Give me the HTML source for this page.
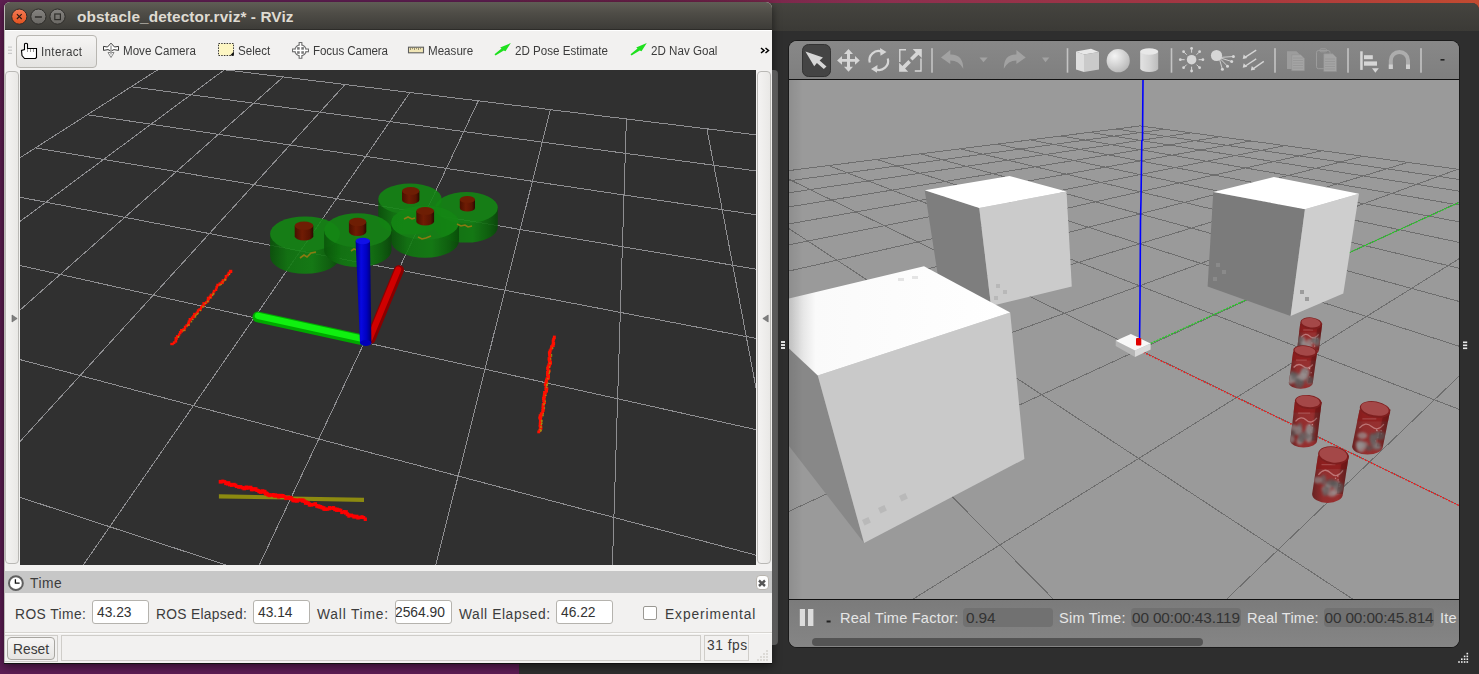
<!DOCTYPE html>
<html><head><meta charset="utf-8">
<style>
*{box-sizing:border-box;margin:0;padding:0}
html,body{width:1479px;height:674px;overflow:hidden;font-family:"Liberation Sans",sans-serif}
body{position:relative;background:#2a2a2a}
.a{position:absolute}
#desk{left:0;top:0;width:1479px;height:674px;background:linear-gradient(90deg,#5a1e4e 0%,#6a2049 45%,#8c2f4f 60%,#a8383f 85%,#c24a30 100%)}
#deskl{left:0;top:0;width:520px;height:674px;background:linear-gradient(180deg,#5f1e52 0%,#5a1c50 60%,#5c1c54 100%)}
/* gazebo window */
#gz{left:519px;top:3px;width:960px;height:671px;background:#2d2d2d;border-radius:7px 7px 0 0;overflow:hidden}
#gzt{left:0;top:0;width:960px;height:28px;background:linear-gradient(#45443f,#3b3a36)}
#gzbody{left:0;top:28px;width:960px;height:643px;background:#2e2e2e}
/* rviz window */
#rv{left:4px;top:2px;width:768px;height:661px;background:#f2f1f0;border-radius:6px 6px 0 0;overflow:hidden;box-shadow:0 1px 0 #111,0 3px 10px 0 rgba(0,0,0,0.55)}
#rvt{left:0;top:0;width:768px;height:28px;background:linear-gradient(#5f5d55,#4f4d47 40%,#3d3c38);border-bottom:1px solid #2d2c29}
#rvt .title{left:73px;top:6px;font-size:15.4px;font-weight:bold;color:#dfdbd2;white-space:nowrap;letter-spacing:0.08px}
.wb{width:15px;height:15px;border-radius:50%;top:7px}
#tb{left:0;top:28px;width:768px;height:40px;background:#f2f1f0;border-top:1px solid #fff}
.tbt{font-size:12px;color:#3c3c3c;white-space:nowrap;top:13px;transform:scaleX(0.967);transform-origin:0 0}
#view{left:16px;top:68px;width:736px;height:495px;background:#303030;overflow:hidden}
.vsl{width:14px;height:493px;top:69px;background:linear-gradient(90deg,#f4f3f2,#e9e8e6);border:1px solid #b9b8b5;border-radius:4px}
#timeh{left:0;top:569px;width:768px;height:22px;background:#c7c7c7}
.lbl{font-size:13.8px;color:#3c3c3c;white-space:nowrap}
.inp{height:24px;background:#fff;border:1px solid #b5b3ae;border-radius:3px;top:598px;overflow:hidden}
.inp span{position:absolute;left:4px;top:4px;font-size:13.8px;color:#333;white-space:nowrap}
/* gazebo panel */
#gp{left:789px;top:41px;width:670px;height:606px;background:#858585;border-radius:8px 8px 8px 8px;overflow:hidden;box-shadow:0 0 0 1px #1a1a1a}
#gtool{left:0;top:0;width:670px;height:38px;background:linear-gradient(#888,#7f7f7f)}
#gview{left:0;top:38px;width:670px;height:521px;background:#9a9a9a;border-top:1px solid #111;border-bottom:1px solid #111}
#gbot{left:0;top:559px;width:670px;height:47px;background:linear-gradient(#7b7b7b,#858585)}
.glbl{font-size:14.6px;color:#e6e6e6;white-space:nowrap;top:610px;letter-spacing:0.2px}
.gbox{height:19px;background:#717171;border-radius:4px;top:608px;overflow:hidden}
.gbox span{position:absolute;left:1px;top:1px;font-size:15.4px;color:#333;white-space:nowrap;letter-spacing:-0.15px}
</style></head><body>
<div id="desk" class="a"></div>
<div id="deskl" class="a"></div>
<div id="gz" class="a">
  <div id="gzt" class="a"></div>
  <div id="gzbody" class="a"></div>
</div>
<!-- gray splitter strip -->
<div class="a" style="left:772px;top:70px;width:6px;height:575px;background:linear-gradient(90deg,#7a7a7a,#5a5a5a);border-radius:0 4px 4px 0"></div>
<div class="a" style="left:781px;top:341px;width:4px;height:2px;background:#ddd"></div>
<div class="a" style="left:781px;top:344px;width:4px;height:2px;background:#ddd"></div>
<div class="a" style="left:781px;top:347px;width:4px;height:2px;background:#ddd"></div>

<!-- ============ GAZEBO PANEL ============ -->
<div id="gp" class="a">
  <div id="gtool" class="a"></div>
  <div id="gview" class="a"></div>
  <div id="gbot" class="a"></div>
</div>
<svg class="a" style="left:0;top:0" width="1479" height="674" viewBox="0 0 1479 674">
  <defs><clipPath id="gclip"><rect x="789" y="80" width="670" height="519"/></clipPath></defs>
  <g clip-path="url(#gclip)">
    <g stroke="#6e6e6e" stroke-width="1" fill="none" shape-rendering="crispEdges"><line x1="-471.9" y1="331.0" x2="1140.2" y2="125.9"/><line x1="-471.9" y1="331.0" x2="-19981.2" y2="6204.9"/><line x1="-611.6" y1="373.1" x2="1164.7" y2="129.2"/><line x1="-226.5" y1="299.8" x2="-16654.2" y2="6210.7"/><line x1="-798.3" y1="429.3" x2="1191.2" y2="132.8"/><line x1="-28.8" y1="274.6" x2="-13327.3" y2="6216.5"/><line x1="-1060.2" y1="508.2" x2="1219.8" y2="136.7"/><line x1="133.9" y1="253.9" x2="-10000.3" y2="6222.3"/><line x1="-1454.6" y1="626.9" x2="1250.9" y2="141.0"/><line x1="270.2" y1="236.6" x2="-6673.4" y2="6228.1"/><line x1="-2115.9" y1="826.0" x2="1284.9" y2="145.6"/><line x1="385.9" y1="221.9" x2="-3346.4" y2="6234.0"/><line x1="-3453.7" y1="1228.8" x2="1322.0" y2="150.7"/><line x1="485.5" y1="209.2" x2="-19.5" y2="6239.8"/><line x1="-7592.6" y1="2474.9" x2="1362.8" y2="156.2"/><line x1="572.0" y1="198.2" x2="3307.5" y2="6245.6"/><line x1="-18517.0" y1="6207.5" x2="1407.9" y2="162.4"/><line x1="647.9" y1="188.5" x2="6634.4" y2="6251.4"/><line x1="-15049.0" y1="6213.5" x2="1458.0" y2="169.2"/><line x1="715.0" y1="180.0" x2="9961.4" y2="6257.2"/><line x1="-11580.9" y1="6219.6" x2="1513.9" y2="176.8"/><line x1="774.8" y1="172.4" x2="13288.4" y2="6263.0"/><line x1="-8112.9" y1="6225.6" x2="1576.7" y2="185.4"/><line x1="828.4" y1="165.5" x2="16615.3" y2="6268.8"/><line x1="-4644.9" y1="6231.7" x2="1647.8" y2="195.1"/><line x1="876.7" y1="159.4" x2="19942.3" y2="6274.6"/><line x1="-1176.8" y1="6237.7" x2="1729.0" y2="206.2"/><line x1="920.5" y1="153.8" x2="20653.9" y2="5563.5"/><line x1="2291.2" y1="6243.8" x2="1822.5" y2="218.9"/><line x1="960.3" y1="148.8" x2="7607.5" y2="1740.2"/><line x1="5759.2" y1="6249.9" x2="1931.5" y2="233.8"/><line x1="996.7" y1="144.1" x2="5235.3" y2="1045.0"/><line x1="9227.3" y1="6255.9" x2="2060.0" y2="251.3"/><line x1="1030.2" y1="139.9" x2="4240.5" y2="753.4"/><line x1="12695.3" y1="6262.0" x2="2213.8" y2="272.3"/><line x1="1060.9" y1="135.9" x2="3693.3" y2="593.1"/><line x1="16163.3" y1="6268.0" x2="2401.3" y2="297.9"/><line x1="1089.4" y1="132.3" x2="3347.2" y2="491.6"/><line x1="19631.3" y1="6274.1" x2="2634.9" y2="329.7"/><line x1="1115.7" y1="129.0" x2="3108.4" y2="421.7"/><line x1="23099.4" y1="6280.1" x2="2933.8" y2="370.5"/><line x1="1140.2" y1="125.9" x2="2933.8" y2="370.5"/></g>
    <defs>
<linearGradient id="canb" x1="0" x2="1" y1="0" y2="0"><stop offset="0" stop-color="#682222"/><stop offset="0.3" stop-color="#922e2e"/><stop offset="0.7" stop-color="#973030"/><stop offset="1" stop-color="#6a2020"/></linearGradient>
<linearGradient id="cangray" x1="0" x2="0" y1="0" y2="1"><stop offset="0" stop-color="#888" stop-opacity="0"/><stop offset="0.5" stop-color="#858080" stop-opacity="0.7"/><stop offset="1" stop-color="#707070" stop-opacity="0.9"/></linearGradient>
<filter id="canblur" x="-20%" y="-20%" width="140%" height="140%"><feGaussianBlur stdDeviation="1.1"/></filter>
<linearGradient id="bigtop" x1="0" x2="1" y1="0" y2="0"><stop offset="0" stop-color="#d0d0d0"/><stop offset="0.12" stop-color="#fafafa"/><stop offset="1" stop-color="#ffffff"/></linearGradient>
<linearGradient id="gvl" x1="0" x2="1" y1="0" y2="0"><stop offset="0" stop-color="#000" stop-opacity="0.08"/><stop offset="1" stop-color="#000" stop-opacity="0"/></linearGradient>
</defs><path d="M1143,80 L1142.5,140 L1141.8,141 L1141,200 L1140.5,220 L1140,300 L1139.6,338" stroke="#0000ff" stroke-width="1.6" fill="none"/><line x1="1150.6" y1="343.4" x2="1459" y2="202.5" stroke="#1fd01f" stroke-width="1.2" stroke-dasharray="2.2 1"/><line x1="1143.4" y1="352.3" x2="1459" y2="505.5" stroke="#ff1010" stroke-width="1.3" stroke-dasharray="1.6 1.6"/><polygon points="924.7,190.3 979.2,208.1 991,306 938.2,277.6" fill="#7e7e7e" /><polygon points="979.2,208.1 1066.5,191.4 1071.8,286.5 991,306" fill="#cbcbcb" /><polygon points="924.7,190.3 1009.5,176 1066.5,191.4 979.2,208.1" fill="#ffffff" /><polygon points="1213.3,192.1 1304.9,209.2 1290.6,316 1207.6,286.5" fill="#7b7b7b" /><polygon points="1304.9,209.2 1359,193.8 1343.3,293.6 1290.6,316" fill="#cecece" /><polygon points="1213.3,192.1 1273.9,177.1 1359,193.8 1304.9,209.2" fill="#ffffff" /><rect x="1216" y="263" width="4" height="4" fill="#8f8f8f" opacity="0.8"/><rect x="1222" y="270" width="4" height="4" fill="#8f8f8f" opacity="0.8"/><rect x="1213" y="277" width="4" height="4" fill="#8f8f8f" opacity="0.8"/><rect x="1300" y="290" width="4" height="4" fill="#8f8f8f" opacity="0.8"/><rect x="1305" y="297" width="4" height="4" fill="#8f8f8f" opacity="0.8"/><rect x="996" y="284" width="4" height="4" fill="#b8b8b8"/><rect x="1003" y="290" width="4" height="4" fill="#b8b8b8"/><rect x="994" y="296" width="4" height="4" fill="#b8b8b8"/><polygon points="789,348.5 817.8,375.6 864.1,543.1 789,446" fill="#888888" /><polygon points="817.8,375.6 1010.2,312.5 1024.4,459 864.1,543.1" fill="#c9c9c9" /><polygon points="789,298.5 924,266.2 1010.2,312.5 817.8,375.6 789,348.5" fill="url(#bigtop)" /><rect x="878" y="508" width="7" height="6" fill="#b9b9b9" transform="rotate(-25 878 508)"/><rect x="899" y="496" width="7" height="6" fill="#b9b9b9" transform="rotate(-25 899 496)"/><rect x="862" y="520" width="7" height="6" fill="#b9b9b9" transform="rotate(-25 862 520)"/><rect x="898" y="278" width="6" height="3" fill="#e4e4e4"/><rect x="912" y="276" width="6" height="3" fill="#e4e4e4"/><polygon points="1115.7,340.7 1135,350.6 1135,356.9 1115.7,346" fill="#b5b5b5" /><polygon points="1135,350.6 1150.6,343.4 1150.6,349.5 1135,356.9" fill="#d9d9d9" /><polygon points="1115.7,340.7 1130.9,334 1150.6,343.4 1135,350.6" fill="#f8f8f8" /><rect x="1136" y="338" width="5.3" height="7.5" rx="1" fill="#e00000"/><clipPath id="canclip1"><path d="M1300.2,323.4 L1297.0,350.0 A11.0,6.0 0 0 0 1319.0,350.0 L1322.2,323.4 Z"/></clipPath><path d="M1300.2,323.4 L1297.0,350.0 A11.0,6.0 0 0 0 1319.0,350.0 L1322.2,323.4 Z" fill="url(#canb)"/><g clip-path="url(#canclip1)"><rect x="1297.2" y="323.4" width="28.0" height="9.0" fill="#8a1414" opacity="0.55"/><path d="M1301.0,337.4 q4.4,-5.4 8.8,-1.2 t8.8,-1.8" stroke="#e0b0b0" stroke-width="1.3" fill="none" opacity="0.55"/><path d="M1303.2,330.0 h9.9" stroke="#d8a8a8" stroke-width="0.8" fill="none" opacity="0.45"/><rect x="1314.4" y="337.9" width="1.2" height="1.2" fill="#e8c0c0" opacity="0.6"/><rect x="1311.3" y="342.3" width="1.2" height="1.2" fill="#e8c0c0" opacity="0.6"/><rect x="1316.7" y="338.1" width="1.2" height="1.2" fill="#e8c0c0" opacity="0.6"/><rect x="1312.4" y="337.4" width="1.2" height="1.2" fill="#e8c0c0" opacity="0.6"/><rect x="1314.2" y="345.5" width="1.2" height="1.2" fill="#e8c0c0" opacity="0.6"/><rect x="1314.2" y="340.1" width="1.2" height="1.2" fill="#e8c0c0" opacity="0.6"/><g filter="url(#canblur)"><ellipse cx="1302.6" cy="347.5" rx="2.8" ry="4.9" fill="#6a6464" opacity="0.7"/><ellipse cx="1307.2" cy="347.6" rx="4.5" ry="4.1" fill="#8a8484" opacity="0.7"/><ellipse cx="1300.8" cy="351.1" rx="3.9" ry="4.0" fill="#5a5454" opacity="0.7"/><ellipse cx="1309.1" cy="343.9" rx="3.1" ry="4.9" fill="#9a9494" opacity="0.7"/><ellipse cx="1299.5" cy="349.8" rx="3.7" ry="3.3" fill="#6a6464" opacity="0.7"/><ellipse cx="1315.3" cy="340.8" rx="3.6" ry="2.9" fill="#8a8484" opacity="0.7"/><ellipse cx="1301.2" cy="347.6" rx="4.8" ry="3.2" fill="#5a5454" opacity="0.7"/><ellipse cx="1302.0" cy="340.3" rx="3.4" ry="3.9" fill="#9a9494" opacity="0.7"/><ellipse cx="1310.4" cy="350.3" rx="3.3" ry="2.6" fill="#6a6464" opacity="0.7"/><ellipse cx="1317.2" cy="341.7" rx="3.6" ry="4.6" fill="#8a8484" opacity="0.7"/><ellipse cx="1298.8" cy="340.5" rx="4.6" ry="4.3" fill="#5a5454" opacity="0.7"/><ellipse cx="1303.9" cy="343.4" rx="2.7" ry="3.0" fill="#9a9494" opacity="0.7"/><ellipse cx="1314.3" cy="340.2" rx="3.7" ry="2.9" fill="#6a6464" opacity="0.7"/></g><path d="M1317.8,323.4 L1314.6,350.0 L1321.0,350.0 L1324.2,323.4 Z" fill="#000" opacity="0.15"/></g><g transform="rotate(6.2 1311.2 323.4)"><ellipse cx="1311.2" cy="323.4" rx="11.0" ry="6.0" fill="#7e1e1e"/><ellipse cx="1310.9" cy="322.8" rx="9.6" ry="4.7" fill="#a44848"/></g><clipPath id="canclip2"><path d="M1293.2,351.5 L1288.8,382.7 A12.0,6.0 0 0 0 1312.8,382.7 L1317.2,351.5 Z"/></clipPath><path d="M1293.2,351.5 L1288.8,382.7 A12.0,6.0 0 0 0 1312.8,382.7 L1317.2,351.5 Z" fill="url(#canb)"/><g clip-path="url(#canclip2)"><rect x="1290.2" y="351.5" width="30.0" height="9.0" fill="#8a1414" opacity="0.55"/><path d="M1293.6,367.5 q4.8,-5.4 9.6,-1.2 t9.6,-1.8" stroke="#e0b0b0" stroke-width="1.3" fill="none" opacity="0.55"/><path d="M1296.0,360.1 h10.8" stroke="#d8a8a8" stroke-width="0.8" fill="none" opacity="0.45"/><rect x="1306.0" y="371.1" width="1.2" height="1.2" fill="#e8c0c0" opacity="0.6"/><rect x="1309.2" y="368.1" width="1.2" height="1.2" fill="#e8c0c0" opacity="0.6"/><rect x="1310.6" y="372.1" width="1.2" height="1.2" fill="#e8c0c0" opacity="0.6"/><rect x="1309.1" y="376.4" width="1.2" height="1.2" fill="#e8c0c0" opacity="0.6"/><rect x="1308.7" y="367.7" width="1.2" height="1.2" fill="#e8c0c0" opacity="0.6"/><rect x="1304.8" y="373.7" width="1.2" height="1.2" fill="#e8c0c0" opacity="0.6"/><g filter="url(#canblur)"><ellipse cx="1296.5" cy="377.2" rx="3.0" ry="4.9" fill="#6a6464" opacity="0.7"/><ellipse cx="1291.8" cy="376.5" rx="3.4" ry="5.2" fill="#8a8484" opacity="0.7"/><ellipse cx="1293.7" cy="376.1" rx="2.7" ry="4.0" fill="#5a5454" opacity="0.7"/><ellipse cx="1297.9" cy="379.8" rx="4.6" ry="4.1" fill="#9a9494" opacity="0.7"/><ellipse cx="1300.8" cy="381.5" rx="4.0" ry="3.7" fill="#6a6464" opacity="0.7"/><ellipse cx="1305.1" cy="372.3" rx="4.6" ry="4.7" fill="#8a8484" opacity="0.7"/><ellipse cx="1291.5" cy="376.5" rx="3.0" ry="4.2" fill="#5a5454" opacity="0.7"/><ellipse cx="1289.8" cy="379.7" rx="4.9" ry="4.6" fill="#9a9494" opacity="0.7"/><ellipse cx="1309.9" cy="380.5" rx="4.1" ry="4.0" fill="#6a6464" opacity="0.7"/><ellipse cx="1304.4" cy="373.9" rx="4.2" ry="5.4" fill="#8a8484" opacity="0.7"/><ellipse cx="1299.0" cy="383.4" rx="4.6" ry="5.4" fill="#5a5454" opacity="0.7"/><ellipse cx="1302.4" cy="376.4" rx="4.0" ry="3.9" fill="#9a9494" opacity="0.7"/><ellipse cx="1294.2" cy="377.1" rx="3.0" ry="3.4" fill="#6a6464" opacity="0.7"/></g><path d="M1312.4,351.5 L1308.0,382.7 L1314.8,382.7 L1319.2,351.5 Z" fill="#000" opacity="0.15"/></g><g transform="rotate(7.2 1305.2 351.5)"><ellipse cx="1305.2" cy="351.5" rx="12.0" ry="6.0" fill="#7e1e1e"/><ellipse cx="1304.9" cy="350.9" rx="10.6" ry="4.7" fill="#a44848"/></g><clipPath id="canclip3"><path d="M1294.8,402.0 L1290.3,440.6 A13.4,7.0 0 0 0 1317.1,440.6 L1321.6,402.0 Z"/></clipPath><path d="M1294.8,402.0 L1290.3,440.6 A13.4,7.0 0 0 0 1317.1,440.6 L1321.6,402.0 Z" fill="url(#canb)"/><g clip-path="url(#canclip3)"><rect x="1291.8" y="402.0" width="32.8" height="10.5" fill="#8a1414" opacity="0.55"/><path d="M1295.5,421.4 q5.4,-6.3 10.7,-1.4 t10.7,-2.1" stroke="#e0b0b0" stroke-width="1.3" fill="none" opacity="0.55"/><path d="M1298.1,413.1 h12.1" stroke="#d8a8a8" stroke-width="0.8" fill="none" opacity="0.45"/><rect x="1311.7" y="427.3" width="1.2" height="1.2" fill="#e8c0c0" opacity="0.6"/><rect x="1308.9" y="433.6" width="1.2" height="1.2" fill="#e8c0c0" opacity="0.6"/><rect x="1310.1" y="429.3" width="1.2" height="1.2" fill="#e8c0c0" opacity="0.6"/><rect x="1311.1" y="431.5" width="1.2" height="1.2" fill="#e8c0c0" opacity="0.6"/><rect x="1311.8" y="424.0" width="1.2" height="1.2" fill="#e8c0c0" opacity="0.6"/><rect x="1308.6" y="424.6" width="1.2" height="1.2" fill="#e8c0c0" opacity="0.6"/><g filter="url(#canblur)"><ellipse cx="1299.8" cy="427.8" rx="2.5" ry="4.8" fill="#6a6464" opacity="0.7"/><ellipse cx="1290.9" cy="439.3" rx="3.8" ry="3.8" fill="#8a8484" opacity="0.7"/><ellipse cx="1292.9" cy="432.6" rx="4.9" ry="3.4" fill="#5a5454" opacity="0.7"/><ellipse cx="1299.7" cy="441.4" rx="3.0" ry="3.3" fill="#9a9494" opacity="0.7"/><ellipse cx="1310.4" cy="430.0" rx="4.6" ry="4.9" fill="#6a6464" opacity="0.7"/><ellipse cx="1298.4" cy="430.4" rx="3.8" ry="4.6" fill="#8a8484" opacity="0.7"/><ellipse cx="1310.4" cy="437.7" rx="4.4" ry="4.0" fill="#5a5454" opacity="0.7"/><ellipse cx="1308.6" cy="437.4" rx="3.0" ry="5.4" fill="#9a9494" opacity="0.7"/><ellipse cx="1305.9" cy="434.9" rx="4.2" ry="4.6" fill="#6a6464" opacity="0.7"/><ellipse cx="1293.6" cy="427.4" rx="3.2" ry="2.9" fill="#8a8484" opacity="0.7"/><ellipse cx="1301.6" cy="438.3" rx="3.0" ry="3.7" fill="#5a5454" opacity="0.7"/><ellipse cx="1309.2" cy="429.2" rx="3.5" ry="5.1" fill="#9a9494" opacity="0.7"/><ellipse cx="1301.5" cy="437.7" rx="3.9" ry="5.5" fill="#6a6464" opacity="0.7"/></g><path d="M1316.2,402.0 L1311.7,440.6 L1319.1,440.6 L1323.6,402.0 Z" fill="#000" opacity="0.15"/></g><g transform="rotate(6.0 1308.2 402.0)"><ellipse cx="1308.2" cy="402.0" rx="13.4" ry="7.0" fill="#7e1e1e"/><ellipse cx="1307.9" cy="401.4" rx="12.0" ry="5.7" fill="#a44848"/></g><clipPath id="canclip4"><path d="M1359.6,409.4 L1352.1,446.5 A15.4,8.0 0 0 0 1382.9,446.5 L1390.4,409.4 Z"/></clipPath><path d="M1359.6,409.4 L1352.1,446.5 A15.4,8.0 0 0 0 1382.9,446.5 L1390.4,409.4 Z" fill="url(#canb)"/><g clip-path="url(#canclip4)"><rect x="1356.6" y="409.4" width="36.8" height="12.0" fill="#8a1414" opacity="0.55"/><path d="M1359.3,428.1 q6.2,-7.2 12.3,-1.6 t12.3,-2.4" stroke="#e0b0b0" stroke-width="1.3" fill="none" opacity="0.55"/><path d="M1362.4,418.9 h13.9" stroke="#d8a8a8" stroke-width="0.8" fill="none" opacity="0.45"/><rect x="1376.0" y="429.5" width="1.2" height="1.2" fill="#e8c0c0" opacity="0.6"/><rect x="1380.7" y="433.2" width="1.2" height="1.2" fill="#e8c0c0" opacity="0.6"/><rect x="1380.5" y="430.1" width="1.2" height="1.2" fill="#e8c0c0" opacity="0.6"/><rect x="1376.5" y="430.1" width="1.2" height="1.2" fill="#e8c0c0" opacity="0.6"/><rect x="1377.3" y="436.8" width="1.2" height="1.2" fill="#e8c0c0" opacity="0.6"/><rect x="1375.0" y="440.3" width="1.2" height="1.2" fill="#e8c0c0" opacity="0.6"/><g filter="url(#canblur)"><ellipse cx="1376.9" cy="447.4" rx="4.3" ry="2.6" fill="#6a6464" opacity="0.7"/><ellipse cx="1376.7" cy="445.1" rx="3.8" ry="3.1" fill="#8a8484" opacity="0.7"/><ellipse cx="1377.2" cy="435.3" rx="2.7" ry="4.1" fill="#5a5454" opacity="0.7"/><ellipse cx="1362.4" cy="435.6" rx="4.9" ry="3.3" fill="#9a9494" opacity="0.7"/><ellipse cx="1373.4" cy="443.3" rx="3.2" ry="2.9" fill="#6a6464" opacity="0.7"/><ellipse cx="1364.7" cy="444.7" rx="3.2" ry="3.1" fill="#8a8484" opacity="0.7"/><ellipse cx="1369.2" cy="448.1" rx="3.8" ry="2.8" fill="#5a5454" opacity="0.7"/><ellipse cx="1361.0" cy="447.0" rx="4.5" ry="5.2" fill="#9a9494" opacity="0.7"/><ellipse cx="1380.6" cy="435.7" rx="4.7" ry="4.2" fill="#6a6464" opacity="0.7"/><ellipse cx="1360.1" cy="444.0" rx="4.3" ry="3.8" fill="#8a8484" opacity="0.7"/><ellipse cx="1372.7" cy="437.6" rx="3.5" ry="4.6" fill="#5a5454" opacity="0.7"/><ellipse cx="1359.5" cy="446.0" rx="3.0" ry="3.5" fill="#9a9494" opacity="0.7"/><ellipse cx="1373.2" cy="439.2" rx="3.6" ry="4.6" fill="#6a6464" opacity="0.7"/></g><path d="M1384.2,409.4 L1376.7,446.5 L1384.9,446.5 L1392.4,409.4 Z" fill="#000" opacity="0.15"/></g><g transform="rotate(10.3 1375.0 409.4)"><ellipse cx="1375.0" cy="409.4" rx="15.4" ry="8.0" fill="#7e1e1e"/><ellipse cx="1374.7" cy="408.8" rx="14.0" ry="6.7" fill="#a44848"/></g><clipPath id="canclip5"><path d="M1318.0,455.4 L1312.1,494.0 A15.4,9.0 0 0 0 1342.9,494.0 L1348.8,455.4 Z"/></clipPath><path d="M1318.0,455.4 L1312.1,494.0 A15.4,9.0 0 0 0 1342.9,494.0 L1348.8,455.4 Z" fill="url(#canb)"/><g clip-path="url(#canclip5)"><rect x="1315.0" y="455.4" width="36.8" height="13.5" fill="#8a1414" opacity="0.55"/><path d="M1318.4,474.8 q6.2,-8.1 12.3,-1.8 t12.3,-2.7" stroke="#e0b0b0" stroke-width="1.3" fill="none" opacity="0.55"/><path d="M1321.5,464.7 h13.9" stroke="#d8a8a8" stroke-width="0.8" fill="none" opacity="0.45"/><rect x="1338.5" y="485.9" width="1.2" height="1.2" fill="#e8c0c0" opacity="0.6"/><rect x="1334.9" y="477.7" width="1.2" height="1.2" fill="#e8c0c0" opacity="0.6"/><rect x="1338.3" y="481.4" width="1.2" height="1.2" fill="#e8c0c0" opacity="0.6"/><rect x="1339.4" y="484.2" width="1.2" height="1.2" fill="#e8c0c0" opacity="0.6"/><rect x="1337.2" y="475.6" width="1.2" height="1.2" fill="#e8c0c0" opacity="0.6"/><rect x="1337.5" y="479.3" width="1.2" height="1.2" fill="#e8c0c0" opacity="0.6"/><g filter="url(#canblur)"><ellipse cx="1323.4" cy="480.0" rx="2.7" ry="5.4" fill="#6a6464" opacity="0.7"/><ellipse cx="1326.5" cy="489.1" rx="5.0" ry="3.6" fill="#8a8484" opacity="0.7"/><ellipse cx="1327.3" cy="486.5" rx="2.6" ry="2.6" fill="#5a5454" opacity="0.7"/><ellipse cx="1329.4" cy="484.4" rx="4.0" ry="3.0" fill="#9a9494" opacity="0.7"/><ellipse cx="1334.3" cy="484.5" rx="3.3" ry="3.9" fill="#6a6464" opacity="0.7"/><ellipse cx="1336.2" cy="484.7" rx="3.3" ry="4.3" fill="#8a8484" opacity="0.7"/><ellipse cx="1334.5" cy="483.8" rx="4.0" ry="2.7" fill="#5a5454" opacity="0.7"/><ellipse cx="1335.6" cy="491.5" rx="4.4" ry="3.0" fill="#9a9494" opacity="0.7"/><ellipse cx="1339.5" cy="487.5" rx="4.6" ry="5.0" fill="#6a6464" opacity="0.7"/><ellipse cx="1317.9" cy="480.1" rx="4.2" ry="3.4" fill="#8a8484" opacity="0.7"/><ellipse cx="1330.8" cy="482.4" rx="4.9" ry="3.4" fill="#5a5454" opacity="0.7"/><ellipse cx="1331.9" cy="494.0" rx="4.2" ry="2.8" fill="#9a9494" opacity="0.7"/><ellipse cx="1325.5" cy="491.7" rx="3.4" ry="4.2" fill="#6a6464" opacity="0.7"/></g><path d="M1342.6,455.4 L1336.7,494.0 L1344.9,494.0 L1350.8,455.4 Z" fill="#000" opacity="0.15"/></g><g transform="rotate(7.8 1333.4 455.4)"><ellipse cx="1333.4" cy="455.4" rx="15.4" ry="9.0" fill="#7e1e1e"/><ellipse cx="1333.1" cy="454.8" rx="14.0" ry="7.7" fill="#a44848"/></g><rect x="789" y="80" width="14" height="519" fill="url(#gvl)"/>
  </g>
</svg>

<svg class="a" style="left:0;top:0" width="1479" height="674" viewBox="0 0 1479 674"><defs>
<radialGradient id="sph" cx="0.35" cy="0.3" r="0.75"><stop offset="0" stop-color="#f4f4f4"/><stop offset="0.6" stop-color="#d0d0d0"/><stop offset="1" stop-color="#b8b8b8"/></radialGradient>
<linearGradient id="cylg" x1="0" x2="1"><stop offset="0" stop-color="#e2e2e2"/><stop offset="0.5" stop-color="#d4d4d4"/><stop offset="1" stop-color="#bcbcbc"/></linearGradient>
</defs><rect x="802.5" y="44.5" width="28" height="32" rx="6" fill="#444" stroke="#333" stroke-width="1"/><path d="M805.4,51.4 L823,57.5 L819.6,60.5 L826.5,66.6 L823.8,69 L816.9,63 L814.2,66.2 Z" fill="#d6d6d6"/><g fill="#d6d6d6"><path d="M848.5,49 L853,54 L850,54 L850,59 L855,59 L855,56 L859.8,60.4 L855,64.8 L855,61.8 L850,61.8 L850,66.8 L853,66.8 L848.5,71.7 L844,66.8 L847,66.8 L847,61.8 L842,61.8 L842,64.8 L837.1,60.4 L842,56 L842,59 L847,59 L847,54 L844,54 Z"/></g><g fill="none" stroke="#d6d6d6" stroke-width="2.2"><path d="M869.8,62.5 A9,9 0 0 1 882,51.8"/><path d="M887.8,58.5 A9,9 0 0 1 875.6,69.2"/></g><g fill="#d6d6d6"><path d="M880,48 L886.5,52 L880.5,55.8 Z"/><path d="M877.5,65 L871,69 L877,72.8 Z"/></g><g fill="none" stroke="#d6d6d6" stroke-width="1.4"><path d="M906,49.7 L899.8,49.7 L899.8,62"/><path d="M914.8,71 L921,71 L921,58.5"/></g><g fill="#d6d6d6"><path d="M921.8,49 L921.8,58 L918.5,54.8 L912.5,60.6 L910,58 L915.8,52.3 L912.7,49 Z"/><path d="M899.1,71.7 L899.1,62.7 L902.4,65.9 L908.4,60.1 L910.9,62.7 L905.1,68.4 L908.2,71.7 Z"/></g><rect x="931.2" y="48.2" width="1.6" height="24.5" fill="#c4c4c4"/><rect x="1066.7" y="48.2" width="1.6" height="24.5" fill="#c4c4c4"/><rect x="1170.7" y="48.2" width="1.6" height="24.5" fill="#c4c4c4"/><rect x="1274.2" y="48.2" width="1.6" height="24.5" fill="#c4c4c4"/><rect x="1347.2" y="48.2" width="1.6" height="24.5" fill="#c4c4c4"/><rect x="1420.2" y="48.2" width="1.6" height="24.5" fill="#c4c4c4"/><path d="M941,57.4 L950.3,50.1 L950.3,54.5 Q963,54 963.3,68.8 Q959,60.5 950.3,60.5 L950.3,63.9 Z" fill="#a2a2a2"/><path d="M1025.7,57.4 L1016.4,50.1 L1016.4,54.5 Q1003.7,54 1003.8,68.8 Q1008,60.5 1016.4,60.5 L1016.4,63.9 Z" fill="#a2a2a2"/><path d="M979.5,57.4 L987.6,57.4 L983.5,62.3 Z" fill="#a2a2a2"/><path d="M1042,57.4 L1049.3,57.4 L1045.5,62.3 Z" fill="#a2a2a2"/><path d="M1076,51.5 L1091,48.8 L1099,52 L1084,54.5 Z" fill="#e8e8e8"/><path d="M1076,51.5 L1084,54.5 L1084,72 L1076,69.5 Z" fill="#dedede"/><path d="M1084,54.5 L1099,52 L1099,69.5 L1084,72 Z" fill="#cacaca"/><circle cx="1118.2" cy="60.7" r="11.6" fill="url(#sph)"/><path d="M1140.2,51.5 L1140.2,68.5 A9,3.5 0 0 0 1158.2,68.5 L1158.2,51.5 Z" fill="url(#cylg)"/><ellipse cx="1149.2" cy="51.5" rx="9" ry="3.3" fill="#e8e8e8"/><circle cx="1191.6" cy="59.7" r="4.8" fill="#d6d6d6"/><line x1="1198.6" y1="59.7" x2="1202.1" y2="59.7" stroke="#d6d6d6" stroke-width="1"/><circle cx="1202.9" cy="59.7" r="1.4" fill="#d6d6d6"/><line x1="1196.5" y1="64.6" x2="1199.0" y2="67.1" stroke="#d6d6d6" stroke-width="1"/><circle cx="1199.6" cy="67.7" r="1.4" fill="#d6d6d6"/><line x1="1191.6" y1="66.7" x2="1191.6" y2="70.2" stroke="#d6d6d6" stroke-width="1"/><circle cx="1191.6" cy="71.0" r="1.4" fill="#d6d6d6"/><line x1="1186.7" y1="64.6" x2="1184.2" y2="67.1" stroke="#d6d6d6" stroke-width="1"/><circle cx="1183.6" cy="67.7" r="1.4" fill="#d6d6d6"/><line x1="1184.6" y1="59.7" x2="1181.1" y2="59.7" stroke="#d6d6d6" stroke-width="1"/><circle cx="1180.3" cy="59.7" r="1.4" fill="#d6d6d6"/><line x1="1186.7" y1="54.8" x2="1184.2" y2="52.3" stroke="#d6d6d6" stroke-width="1"/><circle cx="1183.6" cy="51.7" r="1.4" fill="#d6d6d6"/><line x1="1191.6" y1="52.7" x2="1191.6" y2="49.2" stroke="#d6d6d6" stroke-width="1"/><circle cx="1191.6" cy="48.4" r="1.4" fill="#d6d6d6"/><line x1="1196.5" y1="54.8" x2="1199.0" y2="52.3" stroke="#d6d6d6" stroke-width="1"/><circle cx="1199.6" cy="51.7" r="1.4" fill="#d6d6d6"/><circle cx="1216.5" cy="55.5" r="5.6" fill="#d6d6d6"/><line x1="1219" y1="57.5" x2="1233.4" y2="56.5" stroke="#d6d6d6" stroke-width="0.9"/><circle cx="1233.4" cy="56.5" r="1.5" fill="#d6d6d6"/><line x1="1219" y1="57.5" x2="1231.7" y2="61.5" stroke="#d6d6d6" stroke-width="0.9"/><circle cx="1231.7" cy="61.5" r="1.5" fill="#d6d6d6"/><line x1="1219" y1="57.5" x2="1227.5" y2="66.2" stroke="#d6d6d6" stroke-width="0.9"/><circle cx="1227.5" cy="66.2" r="1.5" fill="#d6d6d6"/><line x1="1219" y1="57.5" x2="1222.4" y2="69.3" stroke="#d6d6d6" stroke-width="0.9"/><circle cx="1222.4" cy="69.3" r="1.5" fill="#d6d6d6"/><line x1="1256.2" y1="50.1" x2="1244.2" y2="57.9" stroke="#d6d6d6" stroke-width="1.3"/><path d="M1242.7,58.9 l1,-4.5 l3.5,3.5 Z" fill="#d6d6d6"/><line x1="1256.2" y1="58.9" x2="1244.2" y2="66.7" stroke="#d6d6d6" stroke-width="1.3"/><path d="M1242.7,67.7 l1,-4.5 l3.5,3.5 Z" fill="#d6d6d6"/><line x1="1263.8" y1="61.4" x2="1252.3" y2="69.4" stroke="#d6d6d6" stroke-width="1.3"/><path d="M1250.8,70.4 l1,-4.5 l3.5,3.5 Z" fill="#d6d6d6"/><path d="M1287,51.3 L1296.5,51.3 L1300.2,55 L1300.2,69 L1287,69 Z" fill="#9c9c9c"/><path d="M1291.7,54.7 L1300.7,54.7 L1304.4,58.4 L1304.4,70.7 L1291.7,70.7 Z" fill="#a4a4a4" stroke="#929292" stroke-width="0.6"/><rect x="1316.5" y="50.5" width="13.6" height="18.2" rx="2" fill="none" stroke="#9c9c9c" stroke-width="1"/><rect x="1320" y="48.8" width="6.5" height="3" rx="1" fill="none" stroke="#9c9c9c" stroke-width="1"/><path d="M1323.8,53.8 L1332.8,53.8 L1336.5,57.5 L1336.5,71.6 L1323.8,71.6 Z" fill="#a4a4a4" stroke="#929292" stroke-width="0.6"/><line x1="1293" y1="58" x2="1303" y2="58" stroke="#8c8c8c" stroke-width="0.5"/><line x1="1325" y1="59" x2="1335" y2="59" stroke="#8c8c8c" stroke-width="0.5"/><line x1="1293" y1="60.5" x2="1303" y2="60.5" stroke="#8c8c8c" stroke-width="0.5"/><line x1="1325" y1="61.5" x2="1335" y2="61.5" stroke="#8c8c8c" stroke-width="0.5"/><line x1="1293" y1="63" x2="1303" y2="63" stroke="#8c8c8c" stroke-width="0.5"/><line x1="1325" y1="64" x2="1335" y2="64" stroke="#8c8c8c" stroke-width="0.5"/><line x1="1293" y1="65.5" x2="1303" y2="65.5" stroke="#8c8c8c" stroke-width="0.5"/><line x1="1325" y1="66.5" x2="1335" y2="66.5" stroke="#8c8c8c" stroke-width="0.5"/><line x1="1293" y1="68" x2="1303" y2="68" stroke="#8c8c8c" stroke-width="0.5"/><line x1="1325" y1="69" x2="1335" y2="69" stroke="#8c8c8c" stroke-width="0.5"/><rect x="1360.2" y="51.3" width="2.5" height="18.6" fill="#d6d6d6"/><rect x="1364" y="55.2" width="8.8" height="4" fill="#d6d6d6"/><rect x="1364" y="61.4" width="13" height="4.3" fill="#d6d6d6"/><path d="M1372,68.2 L1378.8,68.2 L1375.4,72.8 Z" fill="#d6d6d6"/><path d="M1390.8,69 L1390.8,60.5 A8.6,8.6 0 0 1 1408,60.5 L1408,69" fill="none" stroke="#adadad" stroke-width="4"/><rect x="1388.8" y="64.5" width="4" height="4.5" fill="#d0d0d0"/><rect x="1406" y="64.5" width="4" height="4.5" fill="#d0d0d0"/><rect x="1440.5" y="59" width="4" height="1.6" fill="#222"/><g fill="#e8e8e8"><rect x="1463" y="341.5" width="4.2" height="1.6"/><rect x="1463" y="344.5" width="4.2" height="1.6"/><rect x="1463" y="347.5" width="4.2" height="1.6"/></g><g fill="#f0f0f0"><rect x="1466.5" y="652.8" width="1.6" height="1.6"/><rect x="1463.8" y="655.6" width="1.6" height="1.6"/><rect x="1466.5" y="655.6" width="1.6" height="1.6"/><rect x="1461" y="658.4" width="1.6" height="1.6"/><rect x="1463.8" y="658.4" width="1.6" height="1.6"/><rect x="1466.5" y="658.4" width="1.6" height="1.6"/><rect x="1458.2" y="661.2" width="1.6" height="1.6"/><rect x="1461" y="661.2" width="1.6" height="1.6"/><rect x="1463.8" y="661.2" width="1.6" height="1.6"/><rect x="1466.5" y="661.2" width="1.6" height="1.6"/></g><rect x="799.8" y="609" width="5.2" height="17" fill="#dcdcdc"/><rect x="808" y="609" width="5.4" height="17" fill="#dcdcdc"/><rect x="826.6" y="620.5" width="4" height="2" fill="#222"/><rect x="812" y="638" width="391" height="8" rx="4" fill="#545454"/></svg><div class="a glbl" style="left:840px">Real Time Factor:</div><div class="a gbox" style="left:963px;width:90px"><span style="left:3px">0.94</span></div><div class="a glbl" style="left:1059px">Sim Time:</div><div class="a gbox" style="left:1131px;width:110px"><span>00 00:00:43.119</span></div><div class="a glbl" style="left:1247px">Real Time:</div><div class="a gbox" style="left:1323.5px;width:110px"><span>00 00:00:45.814</span></div><div class="a" style="left:1440px;top:600px;width:17px;height:30px;overflow:hidden"><div class="a glbl" style="left:0;top:10px">Iterations</div></div>
<!-- ============ RVIZ WINDOW ============ -->
<div id="rv" class="a">
  <div id="rvt" class="a">
    <div class="a title">obstacle_detector.rviz* - RViz</div>
    <svg class="a" style="left:0;top:0" width="70" height="28">
      <defs><linearGradient id="clb" x1="0" y1="0" x2="0" y2="1"><stop offset="0" stop-color="#f47a55"/><stop offset="1" stop-color="#e2521e"/></linearGradient>
      <linearGradient id="mnb" x1="0" y1="0" x2="0" y2="1"><stop offset="0" stop-color="#858380"/><stop offset="1" stop-color="#6a6864"/></linearGradient></defs>
      <circle cx="15.3" cy="14.6" r="7.6" fill="url(#clb)" stroke="#2d2c29" stroke-width="1"/>
      <circle cx="34.4" cy="14.6" r="7.6" fill="url(#mnb)" stroke="#2d2c29" stroke-width="1"/>
      <circle cx="53.5" cy="14.6" r="7.6" fill="url(#mnb)" stroke="#2d2c29" stroke-width="1"/>
      <path d="M12.9,12.2 L17.7,17 M17.7,12.2 L12.9,17" stroke="#2a1a14" stroke-width="1.1"/>
      <path d="M30.9,15 H37.9" stroke="#2e2d2a" stroke-width="1.3"/>
      <rect x="50.8" y="12" width="5.6" height="5.6" fill="none" stroke="#2e2d2a" stroke-width="1.2"/>
    </svg>

  </div>
  <div id="tb" class="a">
    <div class="a" style="left:12px;top:4px;width:81px;height:33px;border:1px solid #b8b6b1;border-radius:4px;background:linear-gradient(#f6f5f4,#e4e3e1)"></div>
    <div class="a tbt" style="left:37px;top:14px;letter-spacing:0.35px">Interact</div>
    <div class="a tbt" style="left:119px">Move Camera</div>
    <div class="a tbt" style="left:234px">Select</div>
    <div class="a tbt" style="left:309px;letter-spacing:-0.1px">Focus Camera</div>
    <div class="a tbt" style="left:424px">Measure</div>
    <div class="a tbt" style="left:511px">2D Pose Estimate</div>
    <div class="a tbt" style="left:647px">2D Nav Goal</div>
  </div>
<div class="a vsl" style="left:1px"></div>
  <div class="a vsl" style="left:753px"></div>
  <div id="view" class="a"></div>
  <div id="timeh" class="a"></div>
  <div class="a lbl" style="left:26px;top:574px;letter-spacing:0.5px">Time</div>
  <div class="a lbl" style="left:11px;top:605px;letter-spacing:0.42px">ROS Time:</div>
  <div class="a inp" style="left:88px;width:57px"><span>43.23</span></div>
  <div class="a lbl" style="left:152px;top:605px;letter-spacing:0.3px">ROS Elapsed:</div>
  <div class="a inp" style="left:249px;width:57px"><span>43.14</span></div>
  <div class="a lbl" style="left:313px;top:605px;letter-spacing:0.8px">Wall Time:</div>
  <div class="a inp" style="left:391px;width:57px"><span style="left:-1px">2564.90</span></div>
  <div class="a lbl" style="left:455px;top:605px;letter-spacing:0.6px">Wall Elapsed:</div>
  <div class="a inp" style="left:552px;width:57px"><span>46.22</span></div>
  <div class="a lbl" style="left:661px;top:605px;letter-spacing:0.9px">Experimental</div>
  <div class="a" style="left:639px;top:604px;width:14px;height:14px;background:#fff;border:1px solid #9a9893;border-radius:2px"></div>
  <svg class="a" style="left:0;top:568px" width="24" height="24"><circle cx="11.9" cy="13.2" r="6.9" fill="#fff" stroke="#606060" stroke-width="2"/><path d="M11.4,9.2 V13.2 H15.6" fill="none" stroke="#111" stroke-width="1.3"/></svg>
  <div class="a" style="left:751.5px;top:573px;width:13px;height:15px;border-radius:4px;border:1px solid #b8b4ae;background:#fdfdfd"></div>
  <svg class="a" style="left:751px;top:573px" width="14" height="16"><path d="M4,5.5 L10,11 M10,5.5 L4,11" stroke="#555" stroke-width="2.4"/></svg>
  <div class="a" style="left:0;top:630px;width:768px;height:1px;background:#d8d6d2"></div>
  <div class="a" style="left:0;top:631px;width:768px;height:1px;background:#fbfbfa"></div>
  <div class="a" style="left:0;top:633px;width:54px;height:27px;border:1px solid #cfcdc9"></div>
  <div class="a" style="left:3px;top:635px;width:48px;height:23px;border:1px solid #a8a6a1;border-radius:4px;background:linear-gradient(#f7f6f5,#e6e5e3)"></div>
  <div class="a lbl" style="left:9px;top:640px">Reset</div>
  <div class="a" style="left:57px;top:633px;width:640px;height:26px;border:1px solid #cfcdc9"></div>
  <div class="a" style="left:700px;top:633px;width:45px;height:26px;border:1px solid #cfcdc9"></div>
  <div class="a lbl" style="left:703px;top:636px;letter-spacing:0.5px">31 fps</div>
  <svg class="a" style="left:752px;top:646px" width="14" height="14"><g fill="#dcdad6"><rect x="10" y="2" width="2" height="2"/><rect x="7" y="5" width="2" height="2"/><rect x="10" y="5" width="2" height="2"/><rect x="4" y="8" width="2" height="2"/><rect x="7" y="8" width="2" height="2"/><rect x="10" y="8" width="2" height="2"/><rect x="1" y="11" width="2" height="2"/><rect x="4" y="11" width="2" height="2"/><rect x="7" y="11" width="2" height="2"/><rect x="10" y="11" width="2" height="2"/></g></svg>
  <div class="a" style="left:0;top:0;width:1px;height:661px;background:#bdbbb7"></div>
  
</div>
<svg class="a" style="left:0;top:0" width="1479" height="674" viewBox="0 0 1479 674">
  <defs><clipPath id="rclip"><rect x="20" y="70" width="736" height="495"/></clipPath></defs>
  <g clip-path="url(#rclip)">
    <g stroke="#8e8e91" stroke-width="1" fill="none" shape-rendering="crispEdges"><line x1="168.5" y1="62.9" x2="882.4" y2="150.3"/><line x1="131.2" y1="86.7" x2="908.4" y2="191.5"/><line x1="87.4" y1="114.7" x2="940.7" y2="242.4"/><line x1="35.4" y1="147.9" x2="981.6" y2="307.1"/><line x1="-27.5" y1="188.1" x2="1035.2" y2="392.0"/><line x1="-105.1" y1="237.6" x2="1108.8" y2="508.3"/><line x1="-203.2" y1="300.3" x2="1215.7" y2="677.3"/><line x1="-331.1" y1="382.0" x2="1385.3" y2="945.6"/><line x1="-504.9" y1="493.0" x2="1695.9" y2="1436.7"/><line x1="-754.7" y1="652.6" x2="2447.8" y2="2625.8"/><line x1="-1144.4" y1="901.5" x2="6890.0" y2="9650.5"/><line x1="168.5" y1="62.9" x2="-1144.4" y2="901.5"/><line x1="224.5" y1="69.7" x2="-1043.8" y2="1011.0"/><line x1="283.3" y1="76.9" x2="-921.7" y2="1144.0"/><line x1="345.1" y1="84.5" x2="-770.0" y2="1309.2"/><line x1="410.0" y1="92.4" x2="-576.7" y2="1519.7"/><line x1="478.3" y1="100.8" x2="-321.9" y2="1797.1"/><line x1="550.4" y1="109.6" x2="29.2" y2="2179.5"/><line x1="626.4" y1="119.0" x2="544.2" y2="2740.2"/><line x1="706.9" y1="128.8" x2="1372.4" y2="3642.2"/><line x1="792.1" y1="139.2" x2="2925.0" y2="5332.8"/><line x1="882.4" y1="150.3" x2="6890.0" y2="9650.5"/></g>
    <defs>
<linearGradient id="gside" x1="0" x2="1" y1="0" y2="0"><stop offset="0" stop-color="#0a550a"/><stop offset="0.25" stop-color="#107810"/><stop offset="0.6" stop-color="#128012"/><stop offset="0.85" stop-color="#0c640c"/><stop offset="1" stop-color="#094a09"/></linearGradient>
<linearGradient id="rside" x1="0" x2="1" y1="0" y2="0"><stop offset="0" stop-color="#4a1000"/><stop offset="0.4" stop-color="#701c04"/><stop offset="0.8" stop-color="#5a1402"/><stop offset="1" stop-color="#2a0800"/></linearGradient>
<linearGradient id="bax" x1="0" x2="1" y1="0" y2="0"><stop offset="0" stop-color="#000090"/><stop offset="0.35" stop-color="#0808e0"/><stop offset="0.7" stop-color="#0000c0"/><stop offset="1" stop-color="#000070"/></linearGradient>
</defs><g opacity="0.9"><path d="M378.3,199.0 L378.3,219.0 A31.7,15.5 0 0 0 441.7,219.0 L441.7,199.0 Z" fill="url(#gside)"/><ellipse cx="410.0" cy="199.0" rx="31.7" ry="15.5" fill="#148614"/></g><path d="M402.0,191.0 L402.0,200.0 A8.7,4.0 0 0 0 419.4,200.0 L419.4,191.0 Z" fill="url(#rside)"/><ellipse cx="410.7" cy="191.0" rx="8.7" ry="4.0" fill="#6e1e04"/><g opacity="0.9"><path d="M435.0,207.6 L435.0,227.1 A31.4,15.5 0 0 0 497.8,227.1 L497.8,207.6 Z" fill="url(#gside)"/><ellipse cx="466.4" cy="207.6" rx="31.4" ry="15.5" fill="#148614"/></g><path d="M459.8,199.5 L459.8,208.0 A7.6,3.6 0 0 0 475.0,208.0 L475.0,199.5 Z" fill="url(#rside)"/><ellipse cx="467.4" cy="199.5" rx="7.6" ry="3.6" fill="#6e1e04"/><g opacity="0.9"><path d="M391.0,222.7 L391.0,240.7 A34.0,17.0 0 0 0 459.0,240.7 L459.0,222.7 Z" fill="url(#gside)"/><ellipse cx="425.0" cy="222.7" rx="34.0" ry="17.0" fill="#148614"/></g><path d="M416.3,211.0 L416.3,221.5 A8.9,4.0 0 0 0 434.1,221.5 L434.1,211.0 Z" fill="url(#rside)"/><ellipse cx="425.2" cy="211.0" rx="8.9" ry="4.0" fill="#6e1e04"/><g opacity="0.9"><path d="M270.1,233.9 L270.1,256.3 A35.0,17.5 0 0 0 340.1,256.3 L340.1,233.9 Z" fill="url(#gside)"/><ellipse cx="305.1" cy="233.9" rx="35.0" ry="17.5" fill="#148614"/></g><path d="M294.7,225.7 L294.7,236.2 A9.3,4.2 0 0 0 313.3,236.2 L313.3,225.7 Z" fill="url(#rside)"/><ellipse cx="304.0" cy="225.7" rx="9.3" ry="4.2" fill="#6e1e04"/><g opacity="0.9"><path d="M324.1,230.2 L324.1,250.1 A33.7,17.0 0 0 0 391.5,250.1 L391.5,230.2 Z" fill="url(#gside)"/><ellipse cx="357.8" cy="230.2" rx="33.7" ry="17.0" fill="#148614"/></g><path d="M348.9,222.0 L348.9,231.7 A8.7,4.2 0 0 0 366.3,231.7 L366.3,222.0 Z" fill="url(#rside)"/><ellipse cx="357.6" cy="222.0" rx="8.7" ry="4.2" fill="#6e1e04"/><polyline points="300,258 304,255 307,257 311,253 316,252" fill="none" stroke="#8a7a12" stroke-width="1.6"/><polyline points="351,251 354,249 357,250" fill="none" stroke="#8a7a12" stroke-width="1.6"/><polyline points="404,219 408,217 412,219 415,218" fill="none" stroke="#8a7a12" stroke-width="1.6"/><polyline points="418,237 422,239 426,238 431,236" fill="none" stroke="#8a7a12" stroke-width="1.6"/><polyline points="457,224 461,226 465,225 468,227 472,226" fill="none" stroke="#8a7a12" stroke-width="1.6"/><line x1="258" y1="317" x2="363" y2="340" stroke="#00a800" stroke-width="11" stroke-linecap="round"/><line x1="258" y1="315.8" x2="363" y2="338.8" stroke="#10f010" stroke-width="6.5" stroke-linecap="round"/><line x1="399" y1="270" x2="370.5" y2="339" stroke="#880000" stroke-width="10" stroke-linecap="round"/><line x1="398.2" y1="269.6" x2="369.7" y2="338.6" stroke="#d00000" stroke-width="6" stroke-linecap="round"/><path d="M355.6,241 L370,241 L371.4,343 L360,343 Z" fill="url(#bax)"/><ellipse cx="362.8" cy="241" rx="7.2" ry="3.2" fill="#1010e8"/><ellipse cx="365.7" cy="343" rx="5.7" ry="3" fill="#0000b8"/><rect x="170.3" y="342.8" width="3.5" height="2.4" fill="#ff1000"/><rect x="172.8" y="341.3" width="2.6" height="2.8" fill="#ff1000"/><rect x="174.4" y="339.6" width="2.8" height="3.0" fill="#ff1000"/><rect x="174.6" y="336.9" width="3.3" height="3.0" fill="#ff1000"/><rect x="175.9" y="335.1" width="3.3" height="2.6" fill="#ff1000"/><rect x="177.9" y="333.3" width="2.4" height="2.8" fill="#ff1000"/><rect x="178.9" y="331.0" width="2.6" height="3.3" fill="#ff1000"/><rect x="180.1" y="329.0" width="2.9" height="3.6" fill="#ff1000"/><rect x="182.3" y="328.2" width="3.2" height="3.0" fill="#ff1000"/><rect x="183.8" y="325.7" width="2.4" height="3.6" fill="#ff1000"/><rect x="185.4" y="324.2" width="2.4" height="3.1" fill="#ff1000"/><rect x="186.9" y="322.5" width="3.1" height="3.5" fill="#ff1000"/><rect x="187.6" y="320.4" width="2.9" height="2.8" fill="#ff1000"/><rect x="188.6" y="318.0" width="3.1" height="3.4" fill="#ff1000"/><rect x="190.8" y="316.5" width="2.6" height="3.4" fill="#ff1000"/><rect x="192.3" y="314.9" width="2.9" height="3.3" fill="#ff1000"/><rect x="193.1" y="312.8" width="3.3" height="3.2" fill="#ff1000"/><rect x="195.7" y="311.5" width="2.5" height="3.3" fill="#ff1000"/><rect x="196.8" y="309.3" width="2.3" height="3.4" fill="#ff1000"/><rect x="198.3" y="308.2" width="3.4" height="2.9" fill="#ff1000"/><rect x="200.0" y="306.0" width="2.2" height="3.1" fill="#ff1000"/><rect x="201.2" y="304.7" width="3.4" height="2.6" fill="#ff1000"/><rect x="202.4" y="302.1" width="3.1" height="3.3" fill="#ff1000"/><rect x="204.9" y="301.2" width="2.4" height="2.9" fill="#ff1000"/><rect x="206.5" y="299.5" width="2.8" height="3.0" fill="#ff1000"/><rect x="206.8" y="296.7" width="3.1" height="3.5" fill="#ff1000"/><rect x="208.7" y="295.5" width="3.4" height="3.1" fill="#ff1000"/><rect x="209.7" y="293.6" width="3.3" height="2.5" fill="#ff1000"/><rect x="212.2" y="291.7" width="2.3" height="3.4" fill="#ff1000"/><rect x="212.8" y="289.8" width="2.7" height="2.6" fill="#ff1000"/><rect x="214.8" y="288.2" width="2.5" height="2.8" fill="#ff1000"/><rect x="215.4" y="285.8" width="2.6" height="2.8" fill="#ff1000"/><rect x="216.3" y="283.7" width="3.1" height="2.7" fill="#ff1000"/><rect x="218.5" y="282.4" width="3.1" height="2.8" fill="#ff1000"/><rect x="220.6" y="280.8" width="3.1" height="3.3" fill="#ff1000"/><rect x="221.7" y="279.2" width="3.0" height="2.5" fill="#ff1000"/><rect x="224.1" y="277.9" width="2.5" height="2.6" fill="#ff1000"/><rect x="224.7" y="275.0" width="2.6" height="3.3" fill="#ff1000"/><rect x="226.6" y="273.7" width="2.4" height="2.7" fill="#ff1000"/><rect x="227.5" y="271.7" width="3.1" height="2.8" fill="#ff1000"/><rect x="228.9" y="269.8" width="3.4" height="3.2" fill="#ff1000"/><rect x="187.1" y="324.9" width="1.3" height="1.3" fill="#a09010"/><rect x="219.3" y="284.5" width="1.3" height="1.3" fill="#a09010"/><rect x="207.3" y="300.5" width="1.3" height="1.3" fill="#a09010"/><rect x="182.6" y="330.1" width="1.3" height="1.3" fill="#a09010"/><rect x="188.2" y="324.1" width="1.3" height="1.3" fill="#a09010"/><rect x="204.6" y="302.9" width="1.3" height="1.3" fill="#a09010"/><rect x="197.4" y="312.7" width="1.3" height="1.3" fill="#a09010"/><rect x="196.8" y="313.3" width="1.3" height="1.3" fill="#a09010"/><rect x="228.7" y="273.8" width="1.3" height="1.3" fill="#a09010"/><rect x="194.7" y="315.3" width="1.3" height="1.3" fill="#a09010"/><rect x="192.2" y="318.9" width="1.3" height="1.3" fill="#a09010"/><rect x="224.4" y="279.4" width="1.3" height="1.3" fill="#a09010"/><rect x="190.9" y="321.1" width="1.3" height="1.3" fill="#a09010"/><rect x="199.7" y="309.9" width="1.3" height="1.3" fill="#a09010"/><rect x="178.0" y="336.0" width="1.3" height="1.3" fill="#a09010"/><rect x="184.1" y="329.6" width="1.3" height="1.3" fill="#a09010"/><rect x="212.0" y="294.8" width="1.3" height="1.3" fill="#a09010"/><rect x="209.6" y="297.1" width="1.3" height="1.3" fill="#a09010"/><rect x="202.3" y="306.5" width="1.3" height="1.3" fill="#a09010"/><rect x="222.4" y="281.3" width="1.3" height="1.3" fill="#a09010"/><rect x="224.3" y="279.2" width="1.3" height="1.3" fill="#a09010"/><rect x="220.5" y="283.7" width="1.3" height="1.3" fill="#a09010"/><rect x="212.4" y="293.6" width="1.3" height="1.3" fill="#a09010"/><rect x="202.4" y="305.8" width="1.3" height="1.3" fill="#a09010"/><rect x="177.5" y="336.4" width="1.3" height="1.3" fill="#a09010"/><rect x="213.0" y="292.9" width="1.3" height="1.3" fill="#a09010"/><rect x="224.8" y="278.9" width="1.3" height="1.3" fill="#a09010"/><rect x="194.9" y="316.3" width="1.3" height="1.3" fill="#a09010"/><rect x="206.8" y="301.1" width="1.3" height="1.3" fill="#a09010"/><rect x="195.6" y="314.2" width="1.3" height="1.3" fill="#a09010"/><rect x="552.9" y="335.6" width="2.9" height="3.7" fill="#ff1000"/><rect x="552.2" y="337.7" width="2.7" height="3.2" fill="#ff1000"/><rect x="551.7" y="339.5" width="2.8" height="3.6" fill="#ff1000"/><rect x="552.0" y="341.7" width="3.1" height="3.3" fill="#ff1000"/><rect x="551.3" y="343.5" width="3.4" height="3.6" fill="#ff1000"/><rect x="550.1" y="345.3" width="3.0" height="3.5" fill="#ff1000"/><rect x="549.6" y="347.7" width="3.0" height="2.6" fill="#ff1000"/><rect x="548.6" y="349.4" width="3.0" height="3.0" fill="#ff1000"/><rect x="547.9" y="351.2" width="3.4" height="3.3" fill="#ff1000"/><rect x="548.1" y="353.0" width="2.6" height="3.6" fill="#ff1000"/><rect x="548.6" y="355.2" width="2.7" height="3.5" fill="#ff1000"/><rect x="547.6" y="357.1" width="2.9" height="3.5" fill="#ff1000"/><rect x="547.9" y="359.1" width="3.6" height="3.6" fill="#ff1000"/><rect x="548.2" y="361.2" width="3.8" height="3.5" fill="#ff1000"/><rect x="547.4" y="363.3" width="3.7" height="3.2" fill="#ff1000"/><rect x="546.6" y="365.4" width="3.8" height="2.7" fill="#ff1000"/><rect x="546.2" y="367.1" width="3.2" height="3.3" fill="#ff1000"/><rect x="546.9" y="369.3" width="3.6" height="3.0" fill="#ff1000"/><rect x="546.1" y="371.0" width="3.0" height="3.4" fill="#ff1000"/><rect x="546.1" y="373.3" width="3.5" height="2.9" fill="#ff1000"/><rect x="546.4" y="375.0" width="3.6" height="3.7" fill="#ff1000"/><rect x="545.6" y="377.3" width="3.9" height="2.9" fill="#ff1000"/><rect x="545.1" y="378.6" width="2.8" height="4.0" fill="#ff1000"/><rect x="544.5" y="380.6" width="3.4" height="4.0" fill="#ff1000"/><rect x="543.8" y="383.2" width="3.7" height="2.7" fill="#ff1000"/><rect x="544.6" y="385.1" width="2.7" height="2.9" fill="#ff1000"/><rect x="544.5" y="387.3" width="3.8" height="2.8" fill="#ff1000"/><rect x="544.7" y="388.8" width="3.3" height="3.8" fill="#ff1000"/><rect x="543.1" y="391.0" width="3.6" height="2.9" fill="#ff1000"/><rect x="542.9" y="393.1" width="3.6" height="2.7" fill="#ff1000"/><rect x="542.7" y="394.7" width="3.1" height="3.4" fill="#ff1000"/><rect x="542.1" y="396.7" width="3.5" height="3.3" fill="#ff1000"/><rect x="542.3" y="398.7" width="2.9" height="3.3" fill="#ff1000"/><rect x="542.7" y="400.8" width="3.3" height="3.4" fill="#ff1000"/><rect x="541.8" y="403.0" width="3.2" height="2.6" fill="#ff1000"/><rect x="541.7" y="404.5" width="2.9" height="3.6" fill="#ff1000"/><rect x="541.6" y="406.4" width="3.1" height="3.9" fill="#ff1000"/><rect x="541.5" y="408.8" width="3.1" height="3.1" fill="#ff1000"/><rect x="541.3" y="410.6" width="2.7" height="3.4" fill="#ff1000"/><rect x="539.8" y="412.3" width="3.4" height="3.6" fill="#ff1000"/><rect x="538.7" y="414.2" width="3.8" height="3.6" fill="#ff1000"/><rect x="538.3" y="416.5" width="3.7" height="3.0" fill="#ff1000"/><rect x="539.0" y="418.6" width="3.1" height="3.0" fill="#ff1000"/><rect x="538.9" y="420.3" width="3.0" height="3.5" fill="#ff1000"/><rect x="538.8" y="422.4" width="2.7" height="3.2" fill="#ff1000"/><rect x="538.6" y="424.7" width="3.6" height="2.7" fill="#ff1000"/><rect x="539.1" y="426.6" width="3.3" height="3.2" fill="#ff1000"/><rect x="538.4" y="428.6" width="3.1" height="2.9" fill="#ff1000"/><rect x="537.3" y="430.5" width="2.9" height="2.8" fill="#ff1000"/><rect x="540.4" y="426.6" width="1.3" height="1.3" fill="#a09010"/><rect x="540.4" y="429.8" width="1.3" height="1.3" fill="#a09010"/><rect x="545.2" y="394.8" width="1.3" height="1.3" fill="#a09010"/><rect x="542.7" y="413.3" width="1.3" height="1.3" fill="#a09010"/><rect x="541.3" y="419.8" width="1.3" height="1.3" fill="#a09010"/><rect x="541.0" y="422.7" width="1.3" height="1.3" fill="#a09010"/><rect x="547.2" y="378.0" width="1.3" height="1.3" fill="#a09010"/><rect x="540.0" y="430.5" width="1.3" height="1.3" fill="#a09010"/><rect x="539.5" y="429.0" width="1.3" height="1.3" fill="#a09010"/><rect x="550.9" y="354.1" width="1.3" height="1.3" fill="#a09010"/><rect x="543.2" y="404.0" width="1.3" height="1.3" fill="#a09010"/><rect x="544.7" y="400.4" width="1.3" height="1.3" fill="#a09010"/><rect x="546.6" y="384.4" width="1.3" height="1.3" fill="#a09010"/><rect x="546.0" y="384.6" width="1.3" height="1.3" fill="#a09010"/><rect x="549.0" y="370.5" width="1.3" height="1.3" fill="#a09010"/><rect x="546.1" y="386.7" width="1.3" height="1.3" fill="#a09010"/><rect x="540.3" y="426.2" width="1.3" height="1.3" fill="#a09010"/><rect x="549.3" y="362.6" width="1.3" height="1.3" fill="#a09010"/><rect x="546.5" y="383.8" width="1.3" height="1.3" fill="#a09010"/><rect x="547.2" y="382.4" width="1.3" height="1.3" fill="#a09010"/><rect x="543.6" y="402.8" width="1.3" height="1.3" fill="#a09010"/><rect x="550.9" y="355.4" width="1.3" height="1.3" fill="#a09010"/><rect x="548.9" y="371.6" width="1.3" height="1.3" fill="#a09010"/><rect x="549.9" y="358.2" width="1.3" height="1.3" fill="#a09010"/><rect x="541.3" y="421.1" width="1.3" height="1.3" fill="#a09010"/><rect x="543.8" y="407.4" width="1.3" height="1.3" fill="#a09010"/><rect x="540.7" y="423.9" width="1.3" height="1.3" fill="#a09010"/><rect x="542.4" y="415.0" width="1.3" height="1.3" fill="#a09010"/><rect x="548.5" y="372.9" width="1.3" height="1.3" fill="#a09010"/><rect x="540.1" y="429.4" width="1.3" height="1.3" fill="#a09010"/><rect x="546.0" y="384.5" width="1.3" height="1.3" fill="#a09010"/><rect x="541.1" y="422.9" width="1.3" height="1.3" fill="#a09010"/><rect x="548.9" y="366.4" width="1.3" height="1.3" fill="#a09010"/><rect x="552.1" y="347.5" width="1.3" height="1.3" fill="#a09010"/><rect x="540.8" y="420.2" width="1.3" height="1.3" fill="#a09010"/><path d="M218.9,494.2 L290,495.6 L290,496.4 L364,497.8 L364,502 L290,500.4 L290,499.6 L218.9,498.4 Z" fill="#8c8a10"/><rect x="218.7" y="479.9" width="4.1" height="3.7" fill="#ff0000"/><rect x="221.3" y="479.6" width="3.1" height="3.5" fill="#ff0000"/><rect x="223.2" y="480.1" width="3.1" height="3.1" fill="#ff0000"/><rect x="224.2" y="481.8" width="3.9" height="3.3" fill="#ff0000"/><rect x="225.9" y="481.2" width="4.4" height="4.3" fill="#ff0000"/><rect x="228.0" y="482.7" width="3.5" height="3.7" fill="#ff0000"/><rect x="230.0" y="483.1" width="3.1" height="3.8" fill="#ff0000"/><rect x="231.5" y="482.8" width="4.2" height="3.1" fill="#ff0000"/><rect x="233.2" y="483.6" width="4.2" height="3.3" fill="#ff0000"/><rect x="234.8" y="485.0" width="4.2" height="3.0" fill="#ff0000"/><rect x="237.2" y="485.1" width="3.0" height="3.7" fill="#ff0000"/><rect x="239.1" y="485.1" width="3.3" height="3.5" fill="#ff0000"/><rect x="240.7" y="486.2" width="3.4" height="3.2" fill="#ff0000"/><rect x="242.4" y="486.2" width="3.6" height="4.1" fill="#ff0000"/><rect x="244.6" y="485.5" width="3.4" height="4.1" fill="#ff0000"/><rect x="246.2" y="486.4" width="3.7" height="3.3" fill="#ff0000"/><rect x="248.1" y="485.7" width="4.3" height="3.1" fill="#ff0000"/><rect x="249.9" y="487.0" width="3.5" height="4.3" fill="#ff0000"/><rect x="251.4" y="487.4" width="4.3" height="3.8" fill="#ff0000"/><rect x="253.5" y="487.2" width="4.0" height="3.9" fill="#ff0000"/><rect x="255.3" y="488.7" width="3.6" height="3.3" fill="#ff0000"/><rect x="257.3" y="489.2" width="3.1" height="4.0" fill="#ff0000"/><rect x="258.8" y="489.8" width="3.5" height="4.1" fill="#ff0000"/><rect x="260.9" y="489.3" width="3.5" height="4.1" fill="#ff0000"/><rect x="262.5" y="489.8" width="4.0" height="3.9" fill="#ff0000"/><rect x="263.8" y="491.5" width="4.4" height="4.0" fill="#ff0000"/><rect x="266.0" y="492.4" width="3.2" height="4.0" fill="#ff0000"/><rect x="267.6" y="493.4" width="3.6" height="3.8" fill="#ff0000"/><rect x="269.2" y="493.3" width="4.3" height="3.4" fill="#ff0000"/><rect x="271.8" y="493.1" width="3.0" height="3.6" fill="#ff0000"/><rect x="272.9" y="493.4" width="4.3" height="4.3" fill="#ff0000"/><rect x="274.8" y="493.8" width="4.4" height="3.3" fill="#ff0000"/><rect x="277.0" y="495.0" width="3.2" height="3.6" fill="#ff0000"/><rect x="278.7" y="493.8" width="4.2" height="4.2" fill="#ff0000"/><rect x="280.9" y="494.0" width="3.7" height="3.4" fill="#ff0000"/><rect x="282.5" y="495.0" width="3.8" height="3.1" fill="#ff0000"/><rect x="284.2" y="496.5" width="3.4" height="3.6" fill="#ff0000"/><rect x="286.5" y="495.9" width="3.0" height="3.3" fill="#ff0000"/><rect x="287.7" y="495.8" width="4.3" height="4.2" fill="#ff0000"/><rect x="289.8" y="496.7" width="3.6" height="3.9" fill="#ff0000"/><rect x="291.4" y="498.2" width="3.5" height="4.1" fill="#ff0000"/><rect x="293.1" y="498.3" width="3.8" height="4.0" fill="#ff0000"/><rect x="294.9" y="498.7" width="4.0" height="4.0" fill="#ff0000"/><rect x="297.5" y="498.3" width="3.1" height="3.2" fill="#ff0000"/><rect x="299.2" y="498.6" width="3.3" height="3.1" fill="#ff0000"/><rect x="300.8" y="498.4" width="3.8" height="4.2" fill="#ff0000"/><rect x="302.7" y="499.4" width="3.5" height="3.6" fill="#ff0000"/><rect x="303.9" y="500.5" width="4.1" height="4.3" fill="#ff0000"/><rect x="305.8" y="501.2" width="4.0" height="3.5" fill="#ff0000"/><rect x="307.7" y="502.4" width="3.3" height="4.2" fill="#ff0000"/><rect x="309.2" y="502.9" width="4.0" height="3.7" fill="#ff0000"/><rect x="311.3" y="503.1" width="3.7" height="3.1" fill="#ff0000"/><rect x="313.4" y="502.2" width="3.7" height="3.7" fill="#ff0000"/><rect x="315.2" y="504.0" width="3.0" height="3.8" fill="#ff0000"/><rect x="316.6" y="504.3" width="3.8" height="4.0" fill="#ff0000"/><rect x="318.4" y="505.0" width="3.8" height="3.7" fill="#ff0000"/><rect x="320.4" y="505.7" width="3.3" height="3.8" fill="#ff0000"/><rect x="322.2" y="506.2" width="3.3" height="4.4" fill="#ff0000"/><rect x="323.3" y="507.5" width="4.3" height="3.4" fill="#ff0000"/><rect x="325.8" y="507.6" width="3.4" height="3.1" fill="#ff0000"/><rect x="327.9" y="506.1" width="3.3" height="4.2" fill="#ff0000"/><rect x="329.6" y="506.5" width="4.0" height="3.3" fill="#ff0000"/><rect x="331.9" y="506.1" width="3.3" height="3.9" fill="#ff0000"/><rect x="333.2" y="507.6" width="3.8" height="3.6" fill="#ff0000"/><rect x="335.1" y="507.6" width="3.7" height="4.3" fill="#ff0000"/><rect x="336.8" y="508.3" width="4.0" height="3.4" fill="#ff0000"/><rect x="338.9" y="508.7" width="3.5" height="3.1" fill="#ff0000"/><rect x="340.2" y="510.9" width="3.5" height="3.2" fill="#ff0000"/><rect x="342.6" y="510.0" width="3.1" height="3.3" fill="#ff0000"/><rect x="344.0" y="510.2" width="3.8" height="4.4" fill="#ff0000"/><rect x="345.7" y="512.3" width="3.3" height="3.9" fill="#ff0000"/><rect x="347.3" y="513.5" width="3.1" height="4.2" fill="#ff0000"/><rect x="348.9" y="513.6" width="4.1" height="3.5" fill="#ff0000"/><rect x="350.8" y="514.3" width="3.7" height="3.1" fill="#ff0000"/><rect x="352.3" y="514.9" width="4.2" height="3.7" fill="#ff0000"/><rect x="354.2" y="514.7" width="4.3" height="3.5" fill="#ff0000"/><rect x="356.2" y="516.0" width="3.6" height="3.5" fill="#ff0000"/><rect x="358.4" y="515.7" width="3.1" height="3.4" fill="#ff0000"/><rect x="360.5" y="515.2" width="3.1" height="3.8" fill="#ff0000"/><rect x="362.3" y="516.0" width="3.0" height="3.2" fill="#ff0000"/><rect x="363.7" y="517.5" width="3.2" height="3.5" fill="#ff0000"/>
  </g>
</svg>
<svg class="a" style="left:0;top:0" width="780" height="70" viewBox="0 0 780 70">
  <g fill="#c9c9c9"><rect x="8" y="46.5" width="4" height="1.2"/><rect x="8" y="49.6" width="4" height="1.2"/><rect x="8" y="52.8" width="4" height="1.2"/></g>
  <path d="M24.5 58.5 L22 55.5 L21.5 50.5 L24.5 49.5 L24.5 44 Q26 42.5 27.5 44 L27.5 48.5 L36.5 48.5 L36.5 57.5 L35.5 58.5 Z" fill="#fff" stroke="#000" stroke-width="1.1"/>
  <g stroke="#555" stroke-width="0.6"><line x1="27.5" y1="49" x2="27.5" y2="52"/><line x1="30.5" y1="49" x2="30.5" y2="52"/><line x1="33.5" y1="49" x2="33.5" y2="52"/></g>
  <g stroke="#222" stroke-width="0.9" fill="#fff">
    <path d="M111 43.2 L114.5 47 L118.5 46.4 L118.5 50.4 L114 49.6 L111 51 L108 49.6 L103.5 50.4 L103.5 46.4 L107.5 47 Z"/>
  </g>
  <path d="M108 52.5 L111 57.5 L114 52.5 Z" fill="#fff" stroke="#777" stroke-width="0.9"/>
  <rect x="110.2" y="45.5" width="1.6" height="9" fill="#aaa"/>
  <rect x="218.5" y="43.5" width="15" height="12" fill="#fdf6c3" stroke="#222" stroke-width="0.9" stroke-dasharray="1.5 1.2"/>
  <path d="M230 55.6 L233.9 51.5 L233.9 55.6 Z" fill="#111"/>
  <g stroke="#6e6e6e" stroke-width="1.2" fill="#fff">
    <rect x="299.2" y="42.6" width="2.6" height="15.6"/><rect x="292.6" y="49.1" width="15.8" height="2.6"/><circle cx="300.5" cy="50.4" r="5.6"/>
  </g>
  <g fill="#fff"><rect x="299.8" y="43.2" width="1.4" height="14.4"/><rect x="293.2" y="49.7" width="14.6" height="1.4"/></g>
  <g fill="#7a7a7a"><rect x="297.1" y="47.1" width="2.6" height="2.6"/><rect x="301.3" y="47.1" width="2.6" height="2.6"/><rect x="297.1" y="51.2" width="2.6" height="2.6"/><rect x="301.3" y="51.2" width="2.6" height="2.6"/></g>
  <rect x="408.5" y="47.2" width="15" height="5.6" fill="#f1e6b6" stroke="#5e5e5e" stroke-width="1.1"/>
  <g stroke="#6e6650" stroke-width="0.7"><path d="M410.5,47.8v2.2M412.5,47.8v1.4M414.5,47.8v2.2M416.5,47.8v1.4M418.5,47.8v2.2M420.5,47.8v1.4"/></g>
  <g fill="#1ee01e"><path d="M495.5 55.5 L494.5 54.3 L501.5 48.5 L500.2 47.6 L510.8 43.1 L505.5 51.2 L503.8 50.5 Z"/></g>
  <g fill="#1ee01e"><path d="M631.5 55.5 L630.5 54.3 L637.5 48.5 L636.2 47.6 L646.8 43.1 L641.5 51.2 L639.8 50.5 Z"/></g>
  <path d="M761,48 L764,50.5 L761,53 M765.5,48 L768.5,50.5 L765.5,53" fill="none" stroke="#000" stroke-width="1.5"/>
</svg>
<svg class="a" style="left:0;top:300px" width="780" height="30"><path d="M12,15 L17.2,18.5 L12,22 Z" fill="#7e7e7e" stroke="#666" stroke-width="0.6"/><path d="M768.2,15 L762.8,18.5 L768.2,22 Z" fill="#7e7e7e" stroke="#666" stroke-width="0.6"/></svg>
</body></html>
